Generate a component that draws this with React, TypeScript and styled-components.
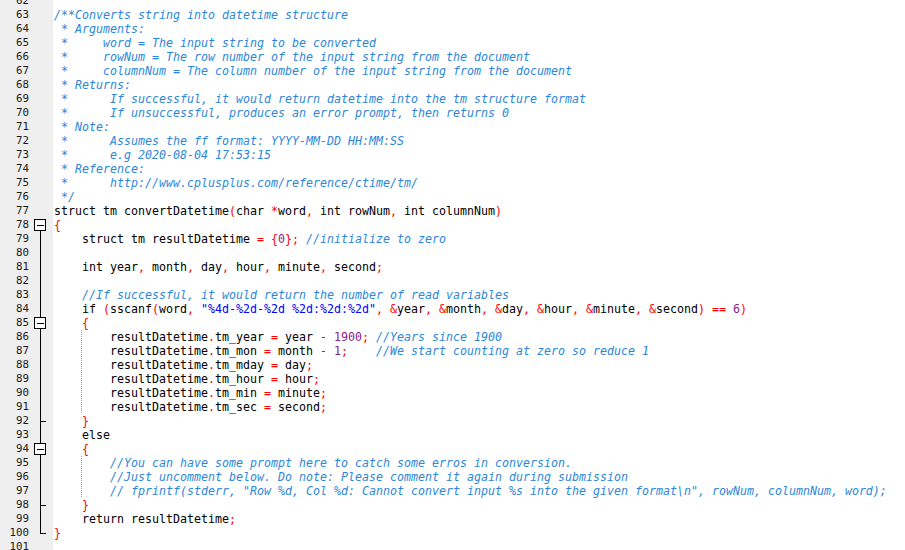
import React from 'react';
import styled, { createGlobalStyle, css } from 'styled-components';

const GlobalStyle = createGlobalStyle`
  html, body { margin: 0; padding: 0; background: #ffffff; }
  body { overflow: hidden; }
`;

type Kind = 'plain' | 'op' | 'num' | 'str' | 'com';
type Tok = { t: string; k: Kind };
type FoldKind = 'none' | 'top' | 'head' | 'body' | 'tick' | 'end';

const SOURCE: string[] = [
  '',
  '/**Converts string into datetime structure',
  ' * Arguments:',
  ' *     word = The input string to be converted',
  ' *     rowNum = The row number of the input string from the document',
  ' *     columnNum = The column number of the input string from the document',
  ' * Returns:',
  ' *      If successful, it would return datetime into the tm structure format',
  ' *      If unsuccessful, produces an error prompt, then returns 0',
  ' * Note:',
  ' *      Assumes the ff format: YYYY-MM-DD HH:MM:SS',
  ' *      e.g 2020-08-04 17:53:15',
  ' * Reference:',
  ' *      http://www.cplusplus.com/reference/ctime/tm/',
  ' */',
  'struct tm convertDatetime(char *word, int rowNum, int columnNum)',
  '{',
  '    struct tm resultDatetime = {0}; //initialize to zero',
  '',
  '    int year, month, day, hour, minute, second;',
  '',
  '    //If successful, it would return the number of read variables',
  '    if (sscanf(word, "%4d-%2d-%2d %2d:%2d:%2d", &year, &month, &day, &hour, &minute, &second) == 6)',
  '    {',
  '        resultDatetime.tm_year = year - 1900; //Years since 1900',
  '        resultDatetime.tm_mon = month - 1;    //We start counting at zero so reduce 1',
  '        resultDatetime.tm_mday = day;',
  '        resultDatetime.tm_hour = hour;',
  '        resultDatetime.tm_min = minute;',
  '        resultDatetime.tm_sec = second;',
  '    }',
  '    else',
  '    {',
  '        //You can have some prompt here to catch some erros in conversion.',
  '        //Just uncomment below. Do note: Please comment it again during submission',
  '        // fprintf(stderr, "Row %d, Col %d: Cannot convert input %s into the given format\\n", rowNum, columnNum, word);',
  '    }',
  '    return resultDatetime;',
  '}',
  '',
];

const FIRST_LINE = 62;

const FOLDS: Record<number, FoldKind> = {
  78: 'top', 79: 'body', 80: 'body', 81: 'body', 82: 'body', 83: 'body', 84: 'body',
  85: 'head', 86: 'body', 87: 'body', 88: 'body', 89: 'body', 90: 'body', 91: 'body',
  92: 'tick', 93: 'body', 94: 'head', 95: 'body', 96: 'body', 97: 'body', 98: 'tick',
  99: 'body', 100: 'end',
};

const GUIDES = new Set([86, 87, 88, 89, 90, 91, 95, 96, 97]);

const OPS = '(){}[];,.*&=-+<>!|/%:?~^';

function tokenize(lines: string[]): Tok[][] {
  let inBlock = false;
  return lines.map((line) => {
    const out: Tok[] = [];
    const push = (t: string, k: Kind) => {
      const last = out[out.length - 1];
      if (last && last.k === k) last.t += t;
      else out.push({ t, k });
    };
    let i = 0;
    while (i < line.length) {
      if (inBlock) {
        const end = line.indexOf('*/', i);
        if (end === -1) { push(line.slice(i), 'com'); i = line.length; }
        else { push(line.slice(i, end + 2), 'com'); i = end + 2; inBlock = false; }
        continue;
      }
      const ch = line[i];
      if (line.startsWith('/*', i)) { inBlock = true; continue; }
      if (line.startsWith('//', i)) { push(line.slice(i), 'com'); break; }
      if (ch === '"') {
        let j = i + 1;
        while (j < line.length && line[j] !== '"') { if (line[j] === '\\') j++; j++; }
        push(line.slice(i, j + 1), 'str');
        i = j + 1;
        continue;
      }
      if (/[0-9]/.test(ch) && (i === 0 || !/[A-Za-z_0-9]/.test(line[i - 1]))) {
        let j = i;
        while (j < line.length && /[0-9]/.test(line[j])) j++;
        push(line.slice(i, j), 'num');
        i = j;
        continue;
      }
      if (OPS.includes(ch)) { push(ch, 'op'); i++; continue; }
      push(ch, 'plain');
      i++;
    }
    return out;
  });
}

const COLORS: Record<Kind, string> = {
  plain: '#000000',
  op: '#ff0000',
  num: '#8a1c8a',
  str: '#0000ff',
  com: '#2c86d8',
};

const Editor = styled.div`
  width: 905px;
  height: 550px;
  overflow: hidden;
  background: #ffffff;
  font-family: "DejaVu Sans Mono", "Liberation Mono", monospace;
`;

const Lines = styled.div`
  display: flex;
  flex-direction: column;
  margin-top: -6px;
`;

const Row = styled.div`
  display: flex;
  height: 14px;
`;

const LineNo = styled.div`
  width: 31px;
  flex: none;
  box-sizing: border-box;
  padding-right: 2px;
  background: #efefef;
  color: #1a1a1a;
  font-size: 10.8px;
  line-height: 14px;
  text-align: right;
`;

const FoldCell = styled.div`
  width: 22px;
  flex: none;
  background: #efefef;
  display: flex;
`;

const Code = styled.div<{ $guide?: boolean }>`
  flex: 1;
  padding-left: 1px;
  font-size: 11.63px;
  line-height: 14px;
  white-space: pre;
  color: #000000;
  ${(p) =>
    p.$guide &&
    css`
      background-image: linear-gradient(#9a9a9a 50%, transparent 50%);
      background-size: 1px 2px;
      background-repeat: repeat-y;
      background-position: 28px 0;
    `}
`;

const Token = styled.span<{ $kind: Kind }>`
  color: ${(p) => COLORS[p.$kind]};
  font-style: ${(p) => (p.$kind === 'com' ? 'italic' : 'normal')};
`;

function FoldMark({ kind }: { kind: FoldKind }) {
  if (kind === 'none') return null;
  const stroke = '#000000';
  return (
    <svg width="22" height="14" viewBox="0 0 22 14" shapeRendering="crispEdges">
      {kind === 'body' || kind === 'tick' ? (
        <line x1="9.5" y1="0" x2="9.5" y2="14" stroke={stroke} />
      ) : null}
      {kind === 'tick' ? <line x1="9.5" y1="7.5" x2="15" y2="7.5" stroke={stroke} /> : null}
      {kind === 'end' ? (
        <>
          <line x1="9.5" y1="0" x2="9.5" y2="8" stroke={stroke} />
          <line x1="9.5" y1="7.5" x2="15" y2="7.5" stroke={stroke} />
        </>
      ) : null}
      {kind === 'top' || kind === 'head' ? (
        <>
          {kind === 'head' ? <line x1="9.5" y1="0" x2="9.5" y2="2" stroke={stroke} /> : null}
          <line x1="9.5" y1="12" x2="9.5" y2="14" stroke={stroke} />
          <rect x="3.5" y="1.5" width="11" height="11" fill="#ffffff" stroke={stroke} />
          <line x1="6" y1="7.5" x2="13" y2="7.5" stroke={stroke} />
        </>
      ) : null}
    </svg>
  );
}

export default function App() {
  const tokens = tokenize(SOURCE);
  return (
    <>
      <GlobalStyle />
      <Editor>
        <Lines>
          {tokens.map((toks, idx) => {
            const n = FIRST_LINE + idx;
            return (
              <Row key={n}>
                <LineNo>{n}</LineNo>
                <FoldCell>
                  <FoldMark kind={FOLDS[n] ?? 'none'} />
                </FoldCell>
                <Code $guide={GUIDES.has(n)}>
                  {toks.map((t, i) => (
                    <Token key={i} $kind={t.k}>
                      {t.t}
                    </Token>
                  ))}
                </Code>
              </Row>
            );
          })}
        </Lines>
      </Editor>
    </>
  );
}
